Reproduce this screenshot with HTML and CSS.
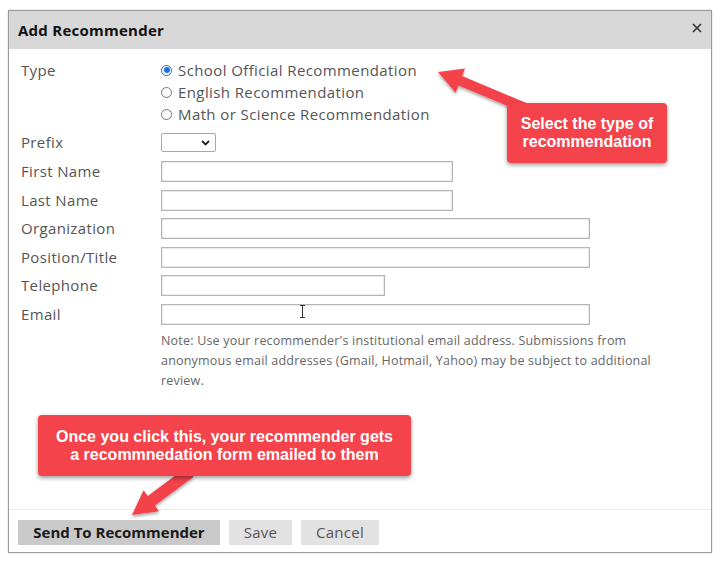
FILE: index.html
```html
<!DOCTYPE html>
<html>
<head>
<meta charset="utf-8">
<link rel="stylesheet" href="styles.css">
</head>
<body>
<div class="dialog">
  <div class="dlg-head">
    <span class="dlg-title">Add Recommender</span>
    <svg class="close" width="10" height="10" viewBox="0 0 10 10"><path d="M1 1L9 9M9 1L1 9" stroke="#333" stroke-width="1.6"/></svg>
  </div>
  <div class="dlg-body">
    <div class="row row-type">
      <span class="label">Type</span>
      <div class="radios">
        <div class="radio-line"><span class="radio checked"></span>School Official Recommendation</div>
        <div class="radio-line"><span class="radio"></span>English Recommendation</div>
        <div class="radio-line"><span class="radio"></span>Math or Science Recommendation</div>
      </div>
    </div>
    <div class="row row-prefix">
      <span class="label">Prefix</span>
      <div class="select">
        <svg class="chev" width="9" height="6" viewBox="0 0 9 6"><path d="M1 1L4.5 4.5L8 1" fill="none" stroke="#222" stroke-width="1.8"/></svg>
      </div>
    </div>
    <div class="row row-first">
      <span class="label">First Name</span>
      <div class="input w-med"></div>
    </div>
    <div class="row">
      <span class="label">Last Name</span>
      <div class="input w-med"></div>
    </div>
    <div class="row">
      <span class="label">Organization</span>
      <div class="input w-long"></div>
    </div>
    <div class="row">
      <span class="label">Position/Title</span>
      <div class="input w-long"></div>
    </div>
    <div class="row">
      <span class="label">Telephone</span>
      <div class="input w-short"></div>
    </div>
    <div class="row">
      <span class="label">Email</span>
      <div class="input w-long email">
        <svg class="ibeam" width="7" height="13" viewBox="0 0 7 13"><path d="M1 0.5H6M3.5 0.5V12.5M1 12.5H6" fill="none" stroke="#333" stroke-width="1"/></svg>
      </div>
    </div>
    <p class="note">Note: Use your recommender's institutional email address. Submissions from anonymous email addresses (Gmail, Hotmail, Yahoo) may be subject to additional review.</p>
  </div>
  <div class="dlg-foot">
    <span class="btn btn-primary">Send To Recommender</span>
    <span class="btn btn-save">Save</span>
    <span class="btn btn-cancel">Cancel</span>
  </div>
</div>

<svg class="arrows" width="720" height="563" viewBox="0 0 720 563">
  <defs>
    <filter id="sh" x="-20%" y="-20%" width="140%" height="140%">
      <feDropShadow dx="0" dy="2" stdDeviation="1.5" flood-color="#000" flood-opacity="0.35"/>
    </filter>
  </defs>
  <polygon filter="url(#sh)" fill="#f4434b" points="438,72 465,68.6 462.1,76 531.8,105.3 528.2,114.7 458.5,85.4 455.6,92.8"/>
  <polygon filter="url(#sh)" fill="#f4434b" points="132,515 143.6,490.3 147.7,496 186.4,467.2 193.6,476.8 154.9,505.6 159,511.3"/>
</svg>

<div class="callout callout-type">Select the type of<br>recommendation</div>
<div class="callout callout-send">Once you click this, your recommender gets<br>a recommnedation form emailed to them</div>
</body>
</html>
```

FILE: styles.css
```css
html, body {
  margin: 0;
  padding: 0;
  background: #ffffff;
}

body {
  position: relative;
  width: 720px;
  height: 563px;
  overflow: hidden;
  font-family: "Open Sans", "Liberation Sans", sans-serif;
}

.dialog {
  margin: 10px 0 0 8px;
  width: 702px;
  height: 541px;
  border: 1px solid #9a9a9a;
  box-shadow: 0 0 1px rgba(0, 0, 0, 0.35);
  display: flex;
  flex-direction: column;
  background: #fff;
}

.dlg-head {
  height: 38px;
  background: #d8d8d8;
  display: flex;
  align-items: center;
  justify-content: space-between;
  padding: 0 9px 0 9px;
  flex: none;
}

.dlg-title {
  font-weight: 700;
  font-size: 15px;
  color: #111;
  letter-spacing: 0.25px;
}

.close {
  margin-top: -4px;
}

.dlg-body {
  flex: 1;
  padding: 10px 0 0 12px;
  display: flex;
  flex-direction: column;
}

.row {
  display: grid;
  grid-template-columns: 140px 1fr;
  align-items: center;
  margin-top: 7.5px;
}

.row-type {
  align-items: start;
  margin-top: 0;
}

.row-prefix {
  margin-top: 8px;
}

.row-first {
  margin-top: 9px;
}

.label {
  font-size: 15px;
  color: #555;
  line-height: 19px;
  letter-spacing: 0.35px;
}

.row-type .label {
  line-height: 22px;
}

.radios {
  display: flex;
  flex-direction: column;
}

.radio-line {
  height: 22px;
  line-height: 22px;
  font-size: 15px;
  color: #555;
  letter-spacing: 0.4px;
  display: flex;
  align-items: center;
}

.radio {
  width: 9px;
  height: 9px;
  border: 1px solid #777;
  border-radius: 50%;
  margin-right: 6px;
  position: relative;
  flex: none;
}

.radio.checked {
  border-color: #1a6fe8;
}

.radio.checked::after {
  content: "";
  position: absolute;
  left: 1.5px;
  top: 1.5px;
  width: 6px;
  height: 6px;
  border-radius: 50%;
  background: #1a6fe8;
}

.select {
  width: 53px;
  height: 17px;
  border: 1px solid #a8a8a8;
  border-radius: 2px;
  position: relative;
}

.chev {
  position: absolute;
  right: 5px;
  top: 6px;
}

.input {
  height: 19px;
  border: 1px solid #b5b5b5;
  box-shadow: inset 0 0 0 0.5px #d8d8d8;
  background: #fff;
}

.w-med { width: 290px; }
.w-long { width: 427px; }
.w-short { width: 222px; }

.email {
  position: relative;
}

.ibeam {
  position: absolute;
  left: 137px;
  top: 0;
}

.note {
  margin: 6px 0 0 140px;
  width: 500px;
  font-size: 12.5px;
  line-height: 20px;
  color: #666;
  letter-spacing: 0.2px;
}

.dlg-foot {
  flex: none;
  border-top: 1px solid #ececec;
  padding: 10px 9px 7px;
  display: flex;
  gap: 9px;
}

.btn {
  height: 25px;
  line-height: 25px;
  font-size: 15px;
  padding: 0 14px;
  color: #555;
  background: #e2e2e2;
  letter-spacing: 0.3px;
}

.btn-primary {
  background: #c9c9c9;
  color: #1a1a1a;
  font-weight: 700;
  width: 174px;
  text-align: center;
  letter-spacing: 0;
}

.btn-save {
  width: 35px;
  text-align: center;
}

.btn-cancel {
  width: 50px;
  text-align: center;
}

.arrows {
  position: absolute;
  left: 0;
  top: 0;
  pointer-events: none;
}

.callout {
  position: absolute;
  background: #f4434b;
  color: #fff;
  font-family: "Liberation Sans", Arial, sans-serif;
  font-weight: 700;
  font-size: 16px;
  line-height: 18px;
  text-align: center;
  border-radius: 4px;
  box-shadow: 0 2px 4px rgba(0, 0, 0, 0.4);
  display: flex;
  align-items: center;
  justify-content: center;
}

.callout-type {
  left: 507px;
  top: 103px;
  width: 160px;
  height: 60px;
}

.callout-send {
  left: 38px;
  top: 415px;
  width: 373px;
  height: 61px;
}
```
